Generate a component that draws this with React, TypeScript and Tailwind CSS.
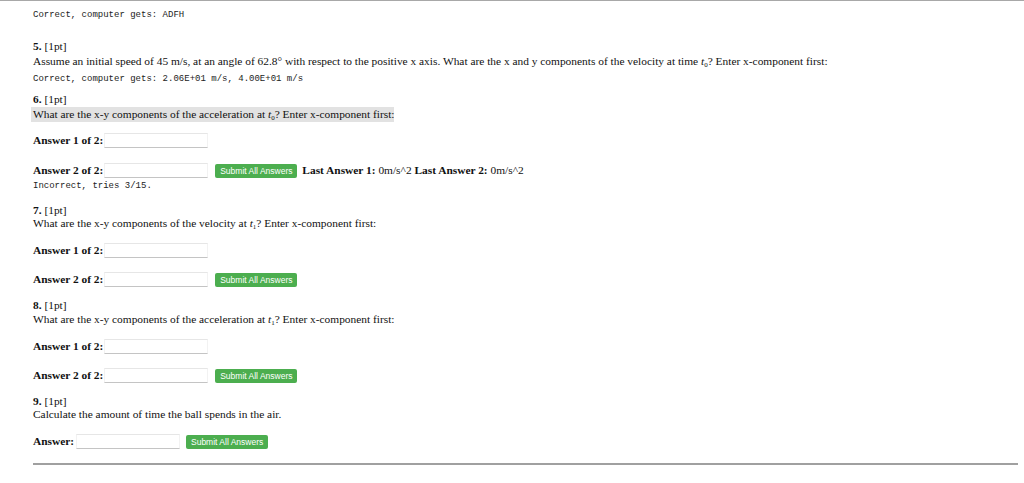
/**
 * Homework problem sheet — questions 5–9 with answer rows.
 */

// ─── Pieces ───────────────────────────────────────────────────────────────────

const serif = "font-['Liberation_Serif',_'Times_New_Roman',_serif]";
const mono = "font-['Liberation_Mono',_'Courier_New',_monospace]";

function Feedback({ text, className = "" }: { text: string; className?: string }) {
  return (
    <div className={`${mono} text-[9px] leading-[12px] text-[#222] ${className}`}>
      {text}
    </div>
  );
}

function SubmitButton() {
  return (
    <button
      type="button"
      className="h-[14px] w-[82px] rounded-[2px] bg-[#4cae4f] font-['Liberation_Sans',_Arial,_sans-serif] text-[8.5px] leading-[14px] text-white"
    >
      Submit All Answers
    </button>
  );
}

function AnswerInput() {
  return (
    <input
      type="text"
      className="h-[15px] w-[104px] border border-[#f2f2f2] border-t-[#e6e6e6] border-b-[#c4c4c4] bg-white outline-none"
    />
  );
}

function Sub({ n }: { n: string }) {
  return (
    <>
      <i>t</i>
      <sub className="text-[7px]">{n}</sub>
    </>
  );
}

function Heading({ n, className = "" }: { n: number; className?: string }) {
  return (
    <div className={`leading-[15px] ${className}`}>
      <b>{n}.</b> [1pt]
    </div>
  );
}

function AnswerRow({
  label,
  button,
  className = "",
  children,
}: {
  label: string;
  button?: boolean;
  className?: string;
  children?: React.ReactNode;
}) {
  return (
    <div className={`flex h-[15px] items-center whitespace-nowrap ${className}`}>
      <b className="mr-[1px]">{label}</b>
      <AnswerInput />
      {button && (
        <div className="ml-[7px]">
          <SubmitButton />
        </div>
      )}
      {children}
    </div>
  );
}

// ─── Page ─────────────────────────────────────────────────────────────────────

export default function App() {
  return (
    <div
      className={`${serif} h-[483px] w-[1024px] overflow-hidden border-t border-[#a8a8a8] bg-white pl-[33px] pr-[6px] text-[11.4px] text-[#111]`}
    >
      <Feedback text="Correct, computer gets: ADFH" className="pt-[8px]" />

      {/* ── 5 ─────────────────────────────────────────────────────────────── */}
      <Heading n={5} className="mt-[18px]" />
      <div className="leading-[15px]">
        Assume an initial speed of 45 m/s, at an angle of 62.8° with respect to
        the positive x axis. What are the x and y components of the velocity at
        time <Sub n="0" />? Enter x-component first:
      </div>
      <Feedback
        text="Correct, computer gets: 2.06E+01 m/s, 4.00E+01 m/s"
        className="mt-[4px]"
      />

      {/* ── 6 ─────────────────────────────────────────────────────────────── */}
      <Heading n={6} className="mt-[7px]" />
      <div className="-ml-[2px] w-[363px] whitespace-nowrap bg-[#e2e2e2] pl-[2px] leading-[15px]">
        What are the x-y components of the acceleration at <Sub n="0" />? Enter
        x-component first:
      </div>
      <AnswerRow label="Answer 1 of 2:" className="mt-[11px]" />
      <AnswerRow label="Answer 2 of 2:" button className="mt-[15px]">
        <span className="ml-[5px]">
          <b>Last Answer 1:</b> 0m/s^2 <b>Last Answer 2:</b> 0m/s^2
        </span>
      </AnswerRow>
      <Feedback text="Incorrect, tries 3/15." className="mt-[2px]" />

      {/* ── 7 ─────────────────────────────────────────────────────────────── */}
      <Heading n={7} className="mt-[11px]" />
      <div className="-mt-[2px] leading-[15px]">
        What are the x-y components of the velocity at <Sub n="1" />? Enter
        x-component first:
      </div>
      <AnswerRow label="Answer 1 of 2:" className="mt-[12px]" />
      <AnswerRow label="Answer 2 of 2:" button className="mt-[14px]" />

      {/* ── 8 ─────────────────────────────────────────────────────────────── */}
      <Heading n={8} className="mt-[11px]" />
      <div className="-mt-[1px] leading-[15px]">
        What are the x-y components of the acceleration at <Sub n="1" />? Enter
        x-component first:
      </div>
      <AnswerRow label="Answer 1 of 2:" className="mt-[12px]" />
      <AnswerRow label="Answer 2 of 2:" button className="mt-[14px]" />

      {/* ── 9 ─────────────────────────────────────────────────────────────── */}
      <Heading n={9} className="mt-[11px]" />
      <div className="-mt-[2px] leading-[15px]">
        Calculate the amount of time the ball spends in the air.
      </div>
      <div className="mt-[12px] flex h-[15px] items-center whitespace-nowrap">
        <b className="mr-[2px]">Answer:</b>
        <AnswerInput />
        <div className="ml-[6px]">
          <SubmitButton />
        </div>
      </div>

      <hr className="mt-[14px] border-t-2 border-[#a0a0a0]" />
    </div>
  );
}
